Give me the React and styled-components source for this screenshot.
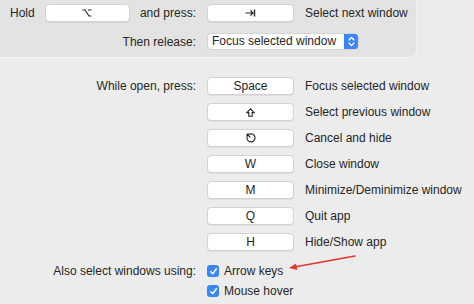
import React from 'react';
import styled, {createGlobalStyle} from 'styled-components';

const Global = createGlobalStyle`
  html, body {
    margin: 0;
    padding: 0;
    background: #ececec;
  }
  body {
    font-family: "Liberation Sans", Arial, sans-serif;
    font-size: 12px;
    color: #262626;
  }
`;

const Page = styled.div`
  position: relative;
  width: 474px;
  height: 304px;
  overflow: hidden;
`;

const TopPanel = styled.div`
  width: 417px;
  box-sizing: border-box;
  background: #e3e3e3;
  border-right: 1px solid #f2f2f2;
  border-bottom: 1px solid #f2f2f2;
  border-radius: 0 0 6px 0;
  padding: 4px 0 7px 10px;
  display: grid;
  grid-template-columns: 186px 87px 1fr;
  column-gap: 11px;
  row-gap: 11px;
  align-items: center;
`;

const HoldCell = styled.div`
  display: flex;
  align-items: center;
  justify-content: space-between;
`;

const Settings = styled.div`
  margin-top: 19px;
  display: grid;
  grid-template-columns: 196px 87px 1fr;
  column-gap: 11px;
  row-gap: 8px;
  align-items: center;
`;

const Label = styled.div`
  text-align: right;
  white-space: nowrap;
  grid-column: 1;
  ${p => p.$top && `
    align-self: start;
    line-height: 20px;
    margin-top: 2px;
  `}
`;

const Desc = styled.div`
  white-space: nowrap;
  line-height: 18px;
`;

const Key = styled.div`
  box-sizing: border-box;
  width: ${p => p.$w || 87}px;
  height: 18px;
  background: #fff;
  border: 1px solid #d2d2d2;
  border-radius: 4px;
  box-shadow: 0 1px 0 rgba(0,0,0,0.06);
  display: flex;
  align-items: center;
  justify-content: center;
  line-height: 16px;
  grid-column: 2;
  color: #1e1e1e;
`;

const Select = styled.div`
  box-sizing: border-box;
  width: 152px;
  height: 17px;
  background: #fff;
  border: 1px solid #d4d4d4;
  border-radius: 4px;
  display: flex;
  align-items: center;
  padding-left: 4px;
  overflow: hidden;
  white-space: nowrap;
  grid-column: 2 / span 2;
`;

const SelectText = styled.span`
  flex: 1;
  line-height: 15px;
`;

const Stepper = styled.div`
  width: 15px;
  height: 17px;
  margin-right: -1px;
  background: #3a86f7;
  border-radius: 0 4px 4px 0;
  display: flex;
  align-items: center;
  justify-content: center;
`;

const ChecksGroup = styled.div`
  grid-column: 2 / span 2;
  display: flex;
  flex-direction: column;
  margin-top: 2px;
`;

const CheckRow = styled.label`
  display: flex;
  align-items: center;
  gap: 5px;
  height: 20px;
  white-space: nowrap;
`;

const Box = styled.span`
  width: 12px;
  height: 12px;
  border-radius: 3px;
  background: #3a86f7;
  display: flex;
  align-items: center;
  justify-content: center;
`;

const Annotation = styled.svg`
  position: absolute;
  left: 285px;
  top: 250px;
  overflow: visible;
`;

const Glyph = ({children, w = 10, h = 9}) => (
  <svg width={w} height={h} viewBox={`0 0 ${w} ${h}`} fill="none" stroke="#222" strokeWidth="1.1">
    {children}
  </svg>
);

const OptionIcon = () => (
  <Glyph w={10} h={8}>
    <path d="M0.5 1 H3 L7 7 H9.5 M6 1 H9.5"/>
  </Glyph>
);

const TabIcon = () => (
  <Glyph w={11} h={8}>
    <path d="M0.5 4 H8 M5.5 1.5 L8 4 L5.5 6.5"/>
    <path d="M9.5 0.5 V7.5" strokeWidth="1.4"/>
  </Glyph>
);

const ShiftIcon = () => (
  <Glyph w={9} h={9}>
    <path d="M4.5 0.8 L8.2 4.6 H6.2 V8.2 H2.8 V4.6 H0.8 Z"/>
  </Glyph>
);

const EscIcon = () => (
  <Glyph w={10} h={10}>
    <path d="M3.2 1.3 A4 4 0 1 1 1.3 3.4"/>
    <path d="M1 1 L4.4 4.4 M1 1 H3.4 M1 1 V3.4"/>
  </Glyph>
);

const Tick = () => (
  <svg width="9" height="9" viewBox="0 0 9 9" fill="none" stroke="#fff" strokeWidth="1.5" strokeLinecap="round" strokeLinejoin="round">
    <path d="M1.8 4.8 L3.8 6.8 L7.4 1.8"/>
  </svg>
);

const shortcuts = [
  {key: 'Space', desc: 'Focus selected window'},
  {key: <ShiftIcon/>, desc: 'Select previous window'},
  {key: <EscIcon/>, desc: 'Cancel and hide'},
  {key: 'W', desc: 'Close window'},
  {key: 'M', desc: 'Minimize/Deminimize window'},
  {key: 'Q', desc: 'Quit app'},
  {key: 'H', desc: 'Hide/Show app'},
];

const Check = ({label}) => (
  <CheckRow>
    <Box><Tick/></Box>
    {label}
  </CheckRow>
);

export default function App() {
  return (
    <Page>
      <Global/>
      <TopPanel>
        <HoldCell>
          <span>Hold</span>
          <Key $w={85}><OptionIcon/></Key>
          <span>and press:</span>
        </HoldCell>
        <Key><TabIcon/></Key>
        <Desc>Select next window</Desc>

        <Label>Then release:</Label>
        <Select>
          <SelectText>Focus selected window</SelectText>
          <Stepper>
            <svg width="7" height="11" viewBox="0 0 7 11" fill="none" stroke="#fff" strokeWidth="1.3" strokeLinecap="round" strokeLinejoin="round">
              <path d="M1 4 L3.5 1.5 L6 4 M1 7 L3.5 9.5 L6 7"/>
            </svg>
          </Stepper>
        </Select>
      </TopPanel>

      <Settings>
        {shortcuts.map((s, i) => (
          <React.Fragment key={i}>
            {i === 0 && <Label>While open, press:</Label>}
            <Key>{s.key}</Key>
            <Desc>{s.desc}</Desc>
          </React.Fragment>
        ))}
        <Label $top>Also select windows using:</Label>
        <ChecksGroup>
          <Check label="Arrow keys"/>
          <Check label="Mouse hover"/>
        </ChecksGroup>
      </Settings>

      <Annotation width="72" height="20" viewBox="0 0 72 20">
        <path d="M70 6 L8 17.3" stroke="#e2362e" strokeWidth="1.6" strokeLinecap="round"/>
        <path d="M4 18 L11 13.6 L12.3 20 Z" fill="#e2362e"/>
      </Annotation>
    </Page>
  );
}
